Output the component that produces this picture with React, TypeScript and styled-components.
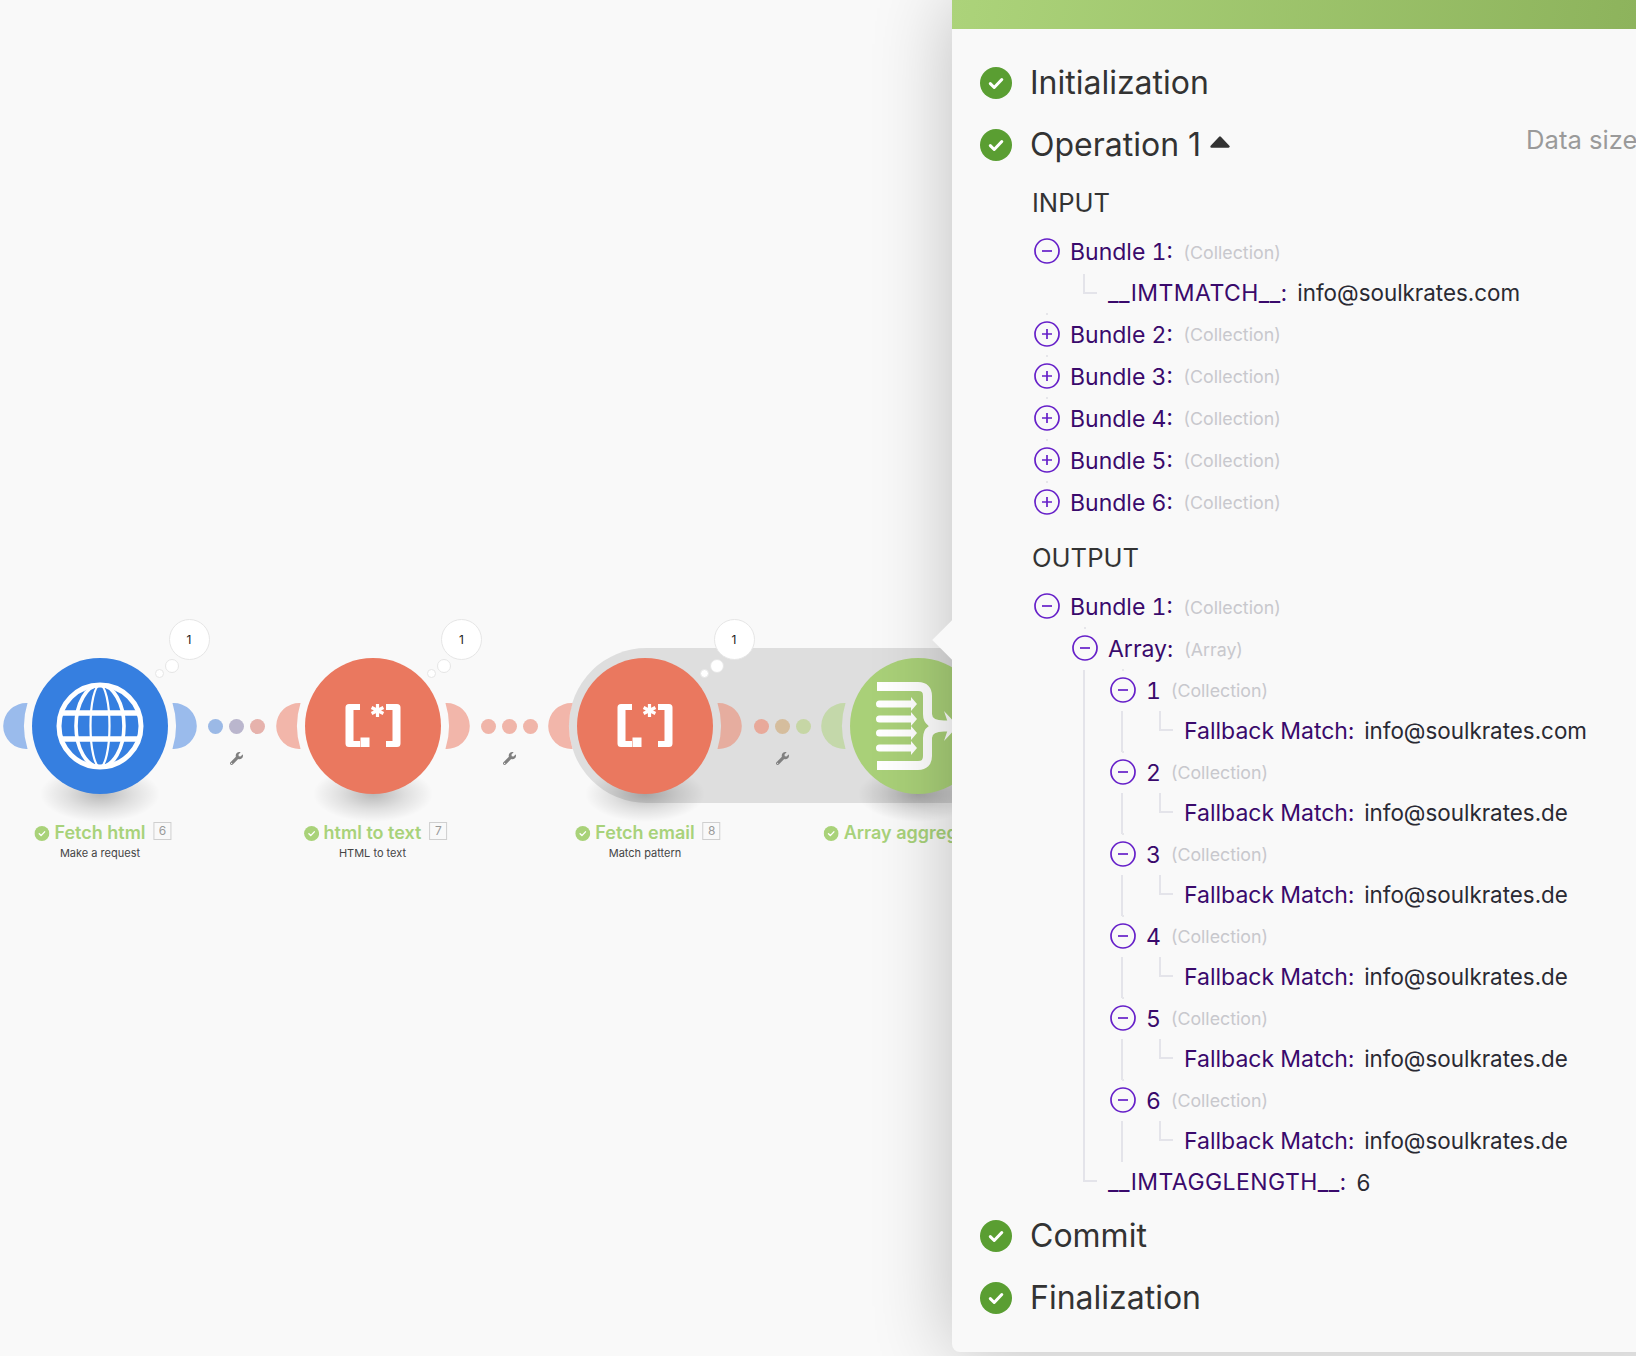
import React from 'react';
import styled, { createGlobalStyle } from 'styled-components';
import { FaWrench } from 'react-icons/fa';

const GlobalStyle = createGlobalStyle`
  html, body {
    margin: 0;
    padding: 0;
    background: #f9f9f9;
  }
  body {
    font-family: Inter, "Liberation Sans", sans-serif;
    overflow: hidden;
  }
`;

const BLUE = '#367fe0';
const RED = '#ea785f';
const GREEN = '#a9d078';

function CheckIcon({ size, color }: { size: number; color: string }) {
  return (
    <svg width={size} height={size} viewBox="0 0 32 32">
      <circle cx="16" cy="16" r="16" fill={color} />
      <path d="M10.3 16.6l3.9 3.9 7.6-8" fill="none" stroke="#fff" strokeWidth="3" strokeLinecap="round" strokeLinejoin="round" />
    </svg>
  );
}

function ExpandIcon({ open }: { open: boolean }) {
  return (
    <svg width="26" height="26" viewBox="0 0 26 26">
      <circle cx="13" cy="13" r="12" fill="none" stroke="#6620c9" strokeWidth="1.7" />
      <path d={open ? 'M8 13h10' : 'M8 13h10M13 8v10'} stroke="#6620c9" strokeWidth="1.7" />
    </svg>
  );
}

function Caret() {
  return (
    <svg width="20" height="12" viewBox="0 0 20 12">
      <path d="M10 1.5L18.5 10.5H1.5Z" fill="#333" stroke="#333" strokeWidth="2.4" strokeLinejoin="round" />
    </svg>
  );
}

function Handles({ left, right }: { left: string; right: string }) {
  return (
    <HandlesSvg viewBox="-100 -30 200 60">
      <path d="M72.45 -22.96A23 23 0 1 1 72.45 22.96A76 76 0 0 0 72.45 -22.96Z" fill={right} />
      <path d="M-72.45 -22.96A23 23 0 1 0 -72.45 22.96A76 76 0 0 1 -72.45 -22.96Z" fill={left} />
    </HandlesSvg>
  );
}

function GlobeIcon() {
  return (
    <IconSvg viewBox="-68 -68 136 136">
      <g fill="none" stroke="#fff">
        <circle r="41" strokeWidth="5" />
        <ellipse rx="24" ry="41" strokeWidth="3.6" />
        <ellipse rx="9.5" ry="41" strokeWidth="2.2" />
        <path d="M-39 -13H39M-39 13H39" strokeWidth="5.4" />
      </g>
    </IconSvg>
  );
}

function RegexIcon() {
  return (
    <IconSvg viewBox="-68 -68 136 136">
      <g fill="#fff">
        <path d="M-24 -22H-13V-16H-19.5V15H-13V21H-24Q-27.5 21 -27.5 17.5V-18.5Q-27.5 -22 -24 -22Z" />
        <path d="M24 -22H13V-16H19.5V15H13V21H24Q27.5 21 27.5 17.5V-18.5Q27.5 -22 24 -22Z" />
        <rect x="-12.5" y="11.5" width="9" height="9.5" />
      </g>
      <path d="M4.5 -22V-9M-1.4 -18.5L10.4 -12.5M10.4 -18.5L-1.4 -12.5" stroke="#fff" strokeWidth="3.2" />
    </IconSvg>
  );
}

function AggregatorIcon() {
  return (
    <IconSvg viewBox="-68 -68 136 136">
      <g fill="none" stroke="#fff" strokeWidth="9">
        <path d="M-41 -39.5H0Q9.5 -39.5 9.5 -30V-12Q9.5 -1 26 -1H36" />
        <path d="M-41 39.5H0Q9.5 39.5 9.5 30V12Q9.5 1 26 1H36" />
      </g>
      <path d="M40 0L26 -15L31 0L26 15Z" fill="#fff" />
      {[-22, -7, 7, 22].map(y => (
        <path
          key={y}
          d={`M-38.5 ${y - 3.5}H-7V${y - 7}L-1 ${y}L-7 ${y + 7}V${y + 3.5}H-38.5A3.5 3.5 0 0 1 -38.5 ${y - 3.5}Z`}
          fill="#fff"
        />
      ))}
    </IconSvg>
  );
}

type ModuleProps = {
  x: number;
  color: string;
  handle: string;
  handleRight?: string;
  name: string;
  sub?: string;
  id?: number;
  count?: number;
  icon: React.ReactNode;
};

function ModuleNode({ x, color, handle, handleRight, name, sub, id, count, icon }: ModuleProps) {
  return (
    <ModuleWrap $x={x}>
      <Handles left={handle} right={handleRight ?? handle} />
      <DropShadow />
      <Disc $color={color}>{icon}</Disc>
      {count !== undefined && (
        <>
          <ThoughtSmall />
          <ThoughtMid />
          <Bubble>{count}</Bubble>
        </>
      )}
      <Label>
        <Name>
          <NameCheck>
            <CheckIcon size={15} color="#a9d279" />
          </NameCheck>
          {name}
          {id !== undefined && <IdBox>{id}</IdBox>}
        </Name>
        {sub && <Sub>{sub}</Sub>}
      </Label>
    </ModuleWrap>
  );
}

function Connector({ x, colors }: { x: number; colors: string[] }) {
  return (
    <ConnectorWrap $x={x}>
      <Dots>
        {colors.map((c, i) => (
          <Dot key={i} $color={c} />
        ))}
      </Dots>
      <WrenchSlot>
        <FaWrench size={13} color="#808080" />
      </WrenchSlot>
    </ConnectorWrap>
  );
}

type CollectionProps = {
  label: string;
  open: boolean;
  type?: string;
  tight?: boolean;
  first?: boolean;
  short?: boolean;
};

function Collection({ label, open, type = '(Collection)', tight, first, short }: CollectionProps) {
  return (
    <Row $tight={tight} $short={short}>
      <Toggle $stub={!first}>
        <ExpandIcon open={open} />
      </Toggle>
      <Key>{label}</Key>
      <Type $tight={tight}>{type}</Type>
    </Row>
  );
}

const items = [
  { n: '1', mail: 'info@soulkrates.com' },
  { n: '2', mail: 'info@soulkrates.de' },
  { n: '3', mail: 'info@soulkrates.de' },
  { n: '4', mail: 'info@soulkrates.de' },
  { n: '5', mail: 'info@soulkrates.de' },
  { n: '6', mail: 'info@soulkrates.de' },
];

export default function App() {
  return (
    <>
      <GlobalStyle />
      <Page>
        <Highlight />
        <ModuleNode x={100} color={BLUE} handle="#9abbec" name="Fetch html" sub="Make a request" id={6} count={1} icon={<GlobeIcon />} />
        <Connector x={236} colors={['#9bb9e6', '#bab6cd', '#e6b2ac']} />
        <ModuleNode x={372.5} color={RED} handle="#f2b6aa" name="html to text" sub="HTML to text" id={7} count={1} icon={<RegexIcon />} />
        <Connector x={509} colors={['#f0b5a9', '#f0b5a9', '#f0b5a9']} />
        <ModuleNode x={645} color={RED} handle="#f2b6aa" handleRight="#e6ad9f" name="Fetch email" sub="Match pattern" id={8} count={1} icon={<RegexIcon />} />
        <Connector x={782} colors={['#e8a99a', '#d5bd9d', '#c6d6a5']} />
        <ModuleNode x={918} color={GREEN} handle="#c4d8aa" name="Array aggregator" icon={<AggregatorIcon />} />

        <Panel>
          <PanelBar />
          <PanelBody>
            <Phase>
              <CheckIcon size={32} color="#5a9e32" />
              <PhaseTitle>Initialization</PhaseTitle>
            </Phase>
            <Phase>
              <CheckIcon size={32} color="#5a9e32" />
              <PhaseTitle>Operation 1</PhaseTitle>
              <CaretSlot>
                <Caret />
              </CaretSlot>
              <DataSize>Data size</DataSize>
            </Phase>
            <Tree>
              <SectionTitle>INPUT</SectionTitle>
              <Collection label="Bundle 1:" open first short />
              <Nested $leafGuide>
                <LeafRow>
                  <Key $caps>__IMTMATCH__:</Key>
                  <Value>info@soulkrates.com</Value>
                </LeafRow>
              </Nested>
              {['2', '3', '4', '5', '6'].map(n => (
                <Collection key={n} label={`Bundle ${n}:`} open={false} />
              ))}
              <SectionTitle $spaced>OUTPUT</SectionTitle>
              <Collection label="Bundle 1:" open first />
              <Nested>
                <Collection label="Array:" type="(Array)" open />
                <ArrayBody>
                  {items.map(it => (
                    <React.Fragment key={it.n}>
                      <Collection label={it.n} open tight />
                      <ItemBody>
                        <LeafRow $tight>
                          <Key>Fallback Match:</Key>
                          <Value>{it.mail}</Value>
                        </LeafRow>
                      </ItemBody>
                    </React.Fragment>
                  ))}
                </ArrayBody>
                <LeafRow $last>
                  <Key $caps>__IMTAGGLENGTH__:</Key>
                  <Value>6</Value>
                </LeafRow>
              </Nested>
            </Tree>
            <Phase>
              <CheckIcon size={32} color="#5a9e32" />
              <PhaseTitle>Commit</PhaseTitle>
            </Phase>
            <Phase>
              <CheckIcon size={32} color="#5a9e32" />
              <PhaseTitle>Finalization</PhaseTitle>
            </Phase>
          </PanelBody>
        </Panel>
      </Page>
    </>
  );
}

const Page = styled.div`
  position: relative;
  width: 1636px;
  height: 1356px;
  overflow: hidden;
  background: #f9f9f9;
`;

const Highlight = styled.div`
  position: absolute;
  left: 569px;
  top: 648px;
  width: 500px;
  height: 155px;
  border-radius: 78px;
  background: #dedede;
`;

const ModuleWrap = styled.div<{ $x: number }>`
  position: absolute;
  left: ${p => p.$x - 68}px;
  top: 658px;
  width: 136px;
  height: 136px;
`;

const HandlesSvg = styled.svg`
  position: absolute;
  left: -32px;
  top: 38px;
  width: 200px;
  height: 60px;
`;

const DropShadow = styled.div`
  position: absolute;
  left: 8px;
  top: 108px;
  width: 120px;
  height: 56px;
  background: radial-gradient(closest-side, rgba(0, 0, 0, 0.26), rgba(0, 0, 0, 0.1) 55%, transparent);
`;

const Disc = styled.div<{ $color: string }>`
  position: relative;
  width: 136px;
  height: 136px;
  border-radius: 50%;
  background: ${p => p.$color};
`;

const IconSvg = styled.svg`
  display: block;
  width: 136px;
  height: 136px;
`;

const Bubble = styled.div`
  position: absolute;
  left: 136.5px;
  top: -39px;
  width: 41px;
  height: 41px;
  box-sizing: border-box;
  display: flex;
  align-items: center;
  justify-content: center;
  border-radius: 50%;
  border: 1px solid #e6e6e6;
  background: #fff;
  color: #222;
  font-size: 12px;
  line-height: 1;
`;

const ThoughtMid = styled.div`
  position: absolute;
  left: 132.5px;
  top: 0.5px;
  width: 14px;
  height: 14px;
  box-sizing: border-box;
  border-radius: 50%;
  border: 1px solid #e6e6e6;
  background: #fff;
`;

const ThoughtSmall = styled.div`
  position: absolute;
  left: 122.5px;
  top: 11px;
  width: 9px;
  height: 9px;
  box-sizing: border-box;
  border-radius: 50%;
  border: 1px solid #e6e6e6;
  background: #fff;
`;

const Label = styled.div`
  position: absolute;
  left: 50%;
  top: 164px;
  transform: translateX(-50%);
  display: flex;
  flex-direction: column;
  align-items: center;
  white-space: nowrap;
`;

const Name = styled.div`
  position: relative;
  color: #a8d27a;
  font-size: 18px;
  font-weight: 600;
  line-height: 22px;
`;

const NameCheck = styled.span`
  position: absolute;
  right: 100%;
  top: 4px;
  margin-right: 5px;
  line-height: 0;
`;

const IdBox = styled.span`
  position: absolute;
  left: 100%;
  top: 0;
  margin-left: 8px;
  width: 18px;
  height: 18px;
  box-sizing: border-box;
  display: flex;
  align-items: center;
  justify-content: center;
  border: 1px solid #cfcfcf;
  color: #9a9a9a;
  font-size: 12px;
  font-weight: 400;
  line-height: 1;
`;

const Sub = styled.div`
  color: #454545;
  font-size: 11px;
  line-height: 18px;
`;

const ConnectorWrap = styled.div<{ $x: number }>`
  position: absolute;
  left: ${p => p.$x - 28.5}px;
  top: 719px;
  width: 57px;
`;

const Dots = styled.div`
  display: flex;
  justify-content: space-between;
`;

const Dot = styled.span<{ $color: string }>`
  width: 15px;
  height: 15px;
  border-radius: 50%;
  background: ${p => p.$color};
`;

const WrenchSlot = styled.div`
  display: flex;
  justify-content: center;
  margin-top: 18px;
`;

const Panel = styled.section`
  position: absolute;
  left: 952px;
  top: 0;
  width: 760px;
  border-radius: 0 0 8px 8px;
  background: #f9f9f9;
  box-shadow: 0 0 80px rgba(0, 0, 0, 0.24);

  &::before {
    content: '';
    position: absolute;
    left: -14px;
    top: 626px;
    width: 28px;
    height: 28px;
    background: #f9f9f9;
    transform: rotate(45deg);
  }
`;

const PanelBar = styled.div`
  position: relative;
  height: 29px;
  background: linear-gradient(100deg, #acd37a, #8db35c 90%);
`;

const PanelBody = styled.div`
  position: relative;
  padding: 23px 28px 23px;
`;

const Phase = styled.div`
  display: flex;
  align-items: center;
  height: 62px;
  gap: 18px;
`;

const PhaseTitle = styled.div`
  color: #333;
  font-size: 32px;
  font-weight: 400;
  line-height: 1;
`;

const CaretSlot = styled.span`
  display: flex;
  margin: -6px 0 0 -9px;
`;

const DataSize = styled.span`
  margin: -12px 0 0 278px;
  color: #9a9a9a;
  font-size: 25.6px;
  white-space: nowrap;
`;

const Tree = styled.div`
  padding: 6.5px 0 3px 54px;
`;

const SectionTitle = styled.div<{ $spaced?: boolean }>`
  height: 40px;
  margin: ${p => (p.$spaced ? '14px 0 8.5px -2px' : '0 0 10px -2px')};
  color: #333;
  font-size: 25.6px;
  line-height: 40px;
`;

const Row = styled.div<{ $tight?: boolean; $short?: boolean }>`
  display: flex;
  align-items: center;
  height: ${p => (p.$short ? '39px' : p.$tight ? '41px' : '42px')};
`;

const Toggle = styled.span<{ $stub?: boolean }>`
  position: relative;
  display: flex;
  flex: none;
  width: 26px;
  margin: -2px 10px 0 0;

  ${p =>
    p.$stub &&
    `
    &::before {
      content: '';
      position: absolute;
      left: 12px;
      top: -8px;
      width: 2px;
      height: 2px;
      background: #e6e6ea;
    }
  `}
`;

const Key = styled.span<{ $caps?: boolean }>`
  color: #3a0a6c;
  font-size: 23px;
  font-variant-numeric: tabular-nums;
  letter-spacing: ${p => (p.$caps ? '0.45px' : '0')};
  white-space: nowrap;
`;

const Value = styled.span`
  margin-left: 10px;
  color: #2a2a33;
  font-size: 22.4px;
  white-space: nowrap;
`;

const Type = styled.span<{ $tight?: boolean }>`
  margin-left: ${p => (p.$tight ? '10px' : '11px')};
  color: #c8c8cd;
  font-size: 17.8px;
  white-space: nowrap;
`;

const LeafRow = styled.div<{ $tight?: boolean; $last?: boolean }>`
  display: flex;
  align-items: center;
  box-sizing: border-box;
  height: ${p => (p.$tight ? '41px' : p.$last ? '40px' : '42px')};
  padding-left: 36px;
  padding-bottom: ${p => (p.$tight ? '2px' : '0')};
`;

const Nested = styled.div<{ $leafGuide?: boolean }>`
  position: relative;
  margin-left: 38px;

  ${p =>
    p.$leafGuide &&
    `
    &::before {
      content: '';
      position: absolute;
      left: 11px;
      top: 2px;
      width: 12px;
      height: 18px;
      border-left: 2px solid #e4e4ea;
      border-bottom: 2px solid #e4e4ea;
    }
  `}
`;

const ArrayBody = styled.div`
  position: relative;
  margin-left: 38px;

  &::before {
    content: '';
    position: absolute;
    left: -27px;
    top: 0;
    width: 12px;
    height: 510px;
    border-left: 2px solid #e4e4ea;
    border-bottom: 2px solid #e4e4ea;
  }
`;

const ItemBody = styled.div`
  position: relative;
  margin-left: 38px;

  &::before {
    content: '';
    position: absolute;
    left: -27px;
    top: 0;
    width: 2px;
    height: 41px;
    background: #e4e4ea;
  }

  &::after {
    content: '';
    position: absolute;
    left: 11px;
    top: 0;
    width: 12px;
    height: 18px;
    border-left: 2px solid #e4e4ea;
    border-bottom: 2px solid #e4e4ea;
  }
`;
